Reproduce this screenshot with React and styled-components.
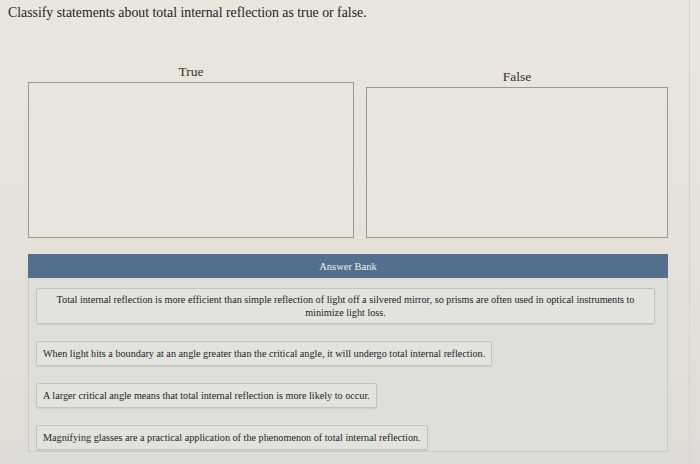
import React from "react";
import styled, { createGlobalStyle } from "styled-components";

const Global = createGlobalStyle`
  html, body { margin: 0; padding: 0; }
  body {
    width: 700px;
    height: 464px;
    overflow: hidden;
    background: linear-gradient(180deg, #ebe6dd 0%, #e6e2da 45%, #dedcd6 100%);
    font-family: "Liberation Serif", "Times New Roman", serif;
  }
`;

const Page = styled.div`
  width: 690px;
  height: 464px;
  box-sizing: border-box;
  padding: 4px 0 0 8px;
  border-right: 1px solid #d3d2cc;
  display: flex;
  flex-direction: column;
`;

const Title = styled.h1`
  margin: 0;
  font-size: 13.8px;
  font-weight: normal;
  color: #24221f;
  line-height: 18px;
`;

const Columns = styled.div`
  display: flex;
  gap: 12px;
  margin: 41px 0 0 20px;
  align-items: flex-start;
`;

const Column = styled.div`
  display: flex;
  flex-direction: column;
  align-items: center;
  width: ${(p) => p.$w}px;
  margin-top: ${(p) => p.$offset || 0}px;
`;

const Label = styled.div`
  font-size: 13.5px;
  color: #34312d;
  line-height: 17px;
  margin-bottom: 2px;
`;

const DropBox = styled.div`
  width: 100%;
  height: ${(p) => p.$h}px;
  box-sizing: border-box;
  border: 1px solid #9c9890;
  background: #e9e4dc;
`;

const Bank = styled.div`
  margin: 16px 0 0 20px;
  width: 640px;
  display: flex;
  flex-direction: column;
  flex: 1;
`;

const BankHeader = styled.div`
  height: 24px;
  background: #536f8d;
  color: #eef1f4;
  font-size: 10.5px;
  display: flex;
  align-items: center;
  justify-content: center;
`;

const BankBody = styled.div`
  flex: 1;
  margin-bottom: 12px;
  border: 1px solid #c9c8c2;
  border-top: none;
  background: #dfdfda;
  padding: 10px 12px 0 7px;
  display: flex;
  flex-direction: column;
  align-items: flex-start;
  gap: 17px;
`;

const Item = styled.div`
  box-sizing: border-box;
  width: ${(p) => (p.$full ? "100%" : "auto")};
  padding: ${(p) => (p.$full ? "4px 16px" : "5px 6px")};
  border: 1px solid #c4c3bc;
  border-radius: 2px;
  background: #e3e3de;
  box-shadow: 0 1px 1px rgba(0, 0, 0, 0.08);
  font-size: 10.2px;
  line-height: 13px;
  color: #23221f;
  text-align: ${(p) => (p.$full ? "center" : "left")};
`;

const items = [
  {
    full: true,
    text: "Total internal reflection is more efficient than simple reflection of light off a silvered mirror, so prisms are often used in optical instruments to minimize light loss.",
  },
  {
    text: "When light hits a boundary at an angle greater than the critical angle, it will undergo total internal reflection.",
  },
  { text: "A larger critical angle means that total internal reflection is more likely to occur." },
  { text: "Magnifying glasses are a practical application of the phenomenon of total internal reflection." },
];

export default function App() {
  return (
    <>
      <Global />
      <Page>
        <Title>Classify statements about total internal reflection as true or false.</Title>
        <Columns>
          <Column $w={326}>
            <Label>True</Label>
            <DropBox $h={156} />
          </Column>
          <Column $w={302} $offset={5}>
            <Label>False</Label>
            <DropBox $h={151} />
          </Column>
        </Columns>
        <Bank>
          <BankHeader>Answer Bank</BankHeader>
          <BankBody>
            {items.map((it, i) => (
              <Item key={i} $full={it.full}>
                {it.text}
              </Item>
            ))}
          </BankBody>
        </Bank>
      </Page>
    </>
  );
}
